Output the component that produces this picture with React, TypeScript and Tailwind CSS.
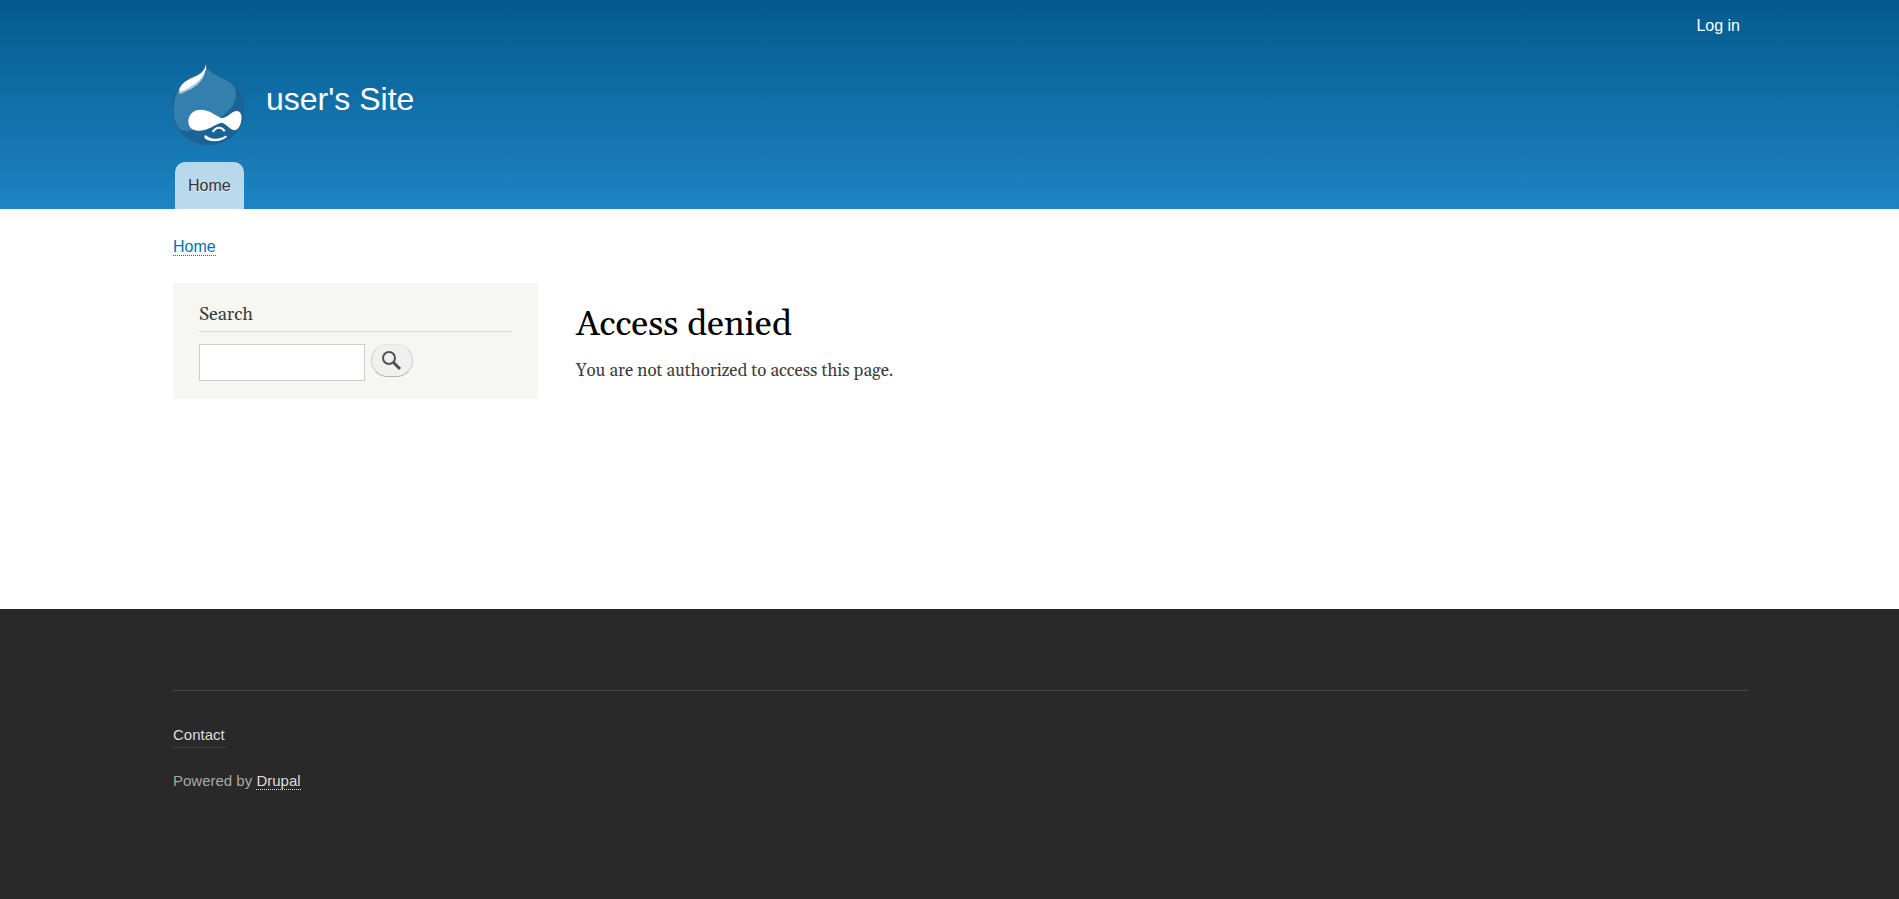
function DropletLogo() {
    return (
        <svg viewBox="24 9 213 246" className="h-[82px] w-[71px]" aria-hidden="true">
            <path
                d="M123 11 C126 24 134 32 146 40 L190 61 C221 77 237 106 237 148 C237 211 192 254 131 254 C70 254 24 211 24 151 C24 112 36 84 54 69 C72 54 92 52 108 41 C119 33 122 24 123 11Z"
                fill="#1a6396"
            />
            <path
                d="M123 14 C126 26 134 34 145 41 L188 63 C203 71 213 84 213 104 C212 134 190 156 165 173 C140 192 105 212 62 212 C52 212 44 208 40 204 C30 190 26 174 26 151 C26 112 38 85 55 71 C73 56 93 53 109 42 C118 35 122 25 123 14Z"
                fill="#3380af"
            />
            <path
                d="M123 11 C126 24 134 32 146 40 L190 61 C221 77 237 106 237 148 C237 211 192 254 131 254 C70 254 24 211 24 151 C24 112 36 84 54 69 C72 54 92 52 108 41 C119 33 122 24 123 11Z"
                fill="none"
                stroke="#245f88"
                strokeWidth="2"
            />
            <path
                d="M119 39 C117 61 93 81 66 93 C54 99 45 106 41 100 L44 84 C60 58 99 58 119 39Z"
                fill="#a6c5dc"
            />
            <path
                d="M123 12 C125 31 118 42 109 53 C97 70 75 82 57 91 C47 96 41 94 44 86 C51 68 70 58 91 49 C108 42 119 32 123 12Z"
                fill="#fff"
            />
            <path
                d="M70 184 C70 163 86 149 108 149 C133 149 149 165 168 174 C184 177 199 154 213 153 C226 151 232 165 229 181 C227 196 220 210 209 211 C196 211 184 190 169 188 C151 191 132 212 100 212 C82 212 70 202 70 184Z"
                fill="#fff"
            />
            <path d="M143 216 C154 199 170 199 179 214" fill="none" stroke="#fff" strokeWidth="6" />
            <path
                d="M119 227 C123 224 126 229 130 231 C145 239 165 238 180 228 C185 225 188 229 183 233 C164 247 132 246 121 236 C118 232 117 229 119 227Z"
                fill="#fff"
            />
        </svg>
    )
}

function SearchIcon() {
    return (
        <svg viewBox="0 0 20 20" className="size-5" fill="none" stroke="#505050" aria-hidden="true">
            <circle cx="7" cy="7" r="6" strokeWidth="2" />
            <path d="M11 11 L13 13" strokeWidth="2" />
            <path d="M12 12 L18 18" strokeWidth="3" />
        </svg>
    )
}

function Header() {
    return (
        <header className="bg-linear-to-b from-[#055a8e] to-[#1d84c3]">
            <div className="mx-auto max-w-[1597px] pl-[22px]">
                <nav className="flex justify-end pt-[14px] pr-2">
                    <a href="#login" className="text-base text-white">
                        Log in
                    </a>
                </nav>
                <div className="mt-[25px] flex gap-[22px]">
                    <a href="#home" aria-label="Home">
                        <DropletLogo />
                    </a>
                    <a href="#home" className="mt-3 text-[32px] leading-12 text-white">
                        user&apos;s Site
                    </a>
                </div>
                <nav className="mt-[17px] flex pl-0.5">
                    <a
                        href="#home"
                        className="rounded-t-[10px] bg-white/70 px-[13px] text-base leading-[47px] text-[#333] text-shadow-[0_1px_0_#eee]"
                    >
                        Home
                    </a>
                </nav>
            </div>
        </header>
    )
}

function SearchBlock() {
    return (
        <aside className="w-[365px] shrink-0 bg-[#f6f6f2] px-[26px] pt-[18px] pb-[18px]">
            <h2 className="mb-3 border-b border-[#d6d6d6] pb-0.5 font-[Georgia,Gelasio,'Liberation_Serif',serif] text-lg text-[#3b3b3b]">
                Search
            </h2>
            <form className="flex items-start gap-1.5" onSubmit={(e) => e.preventDefault()}>
                <input
                    type="search"
                    aria-label="Search"
                    className="h-[37px] w-[166px] border border-[#ccc] bg-white px-1 text-base text-[#3b3b3b]"
                />
                <button
                    type="submit"
                    aria-label="Search"
                    className="flex h-[33px] w-[42px] items-center justify-center rounded-full border border-[#ccc] border-t-[#e4e4e4] border-b-[#b4b4b4] bg-[#f0f0f0]"
                >
                    <SearchIcon />
                </button>
            </form>
        </aside>
    )
}

function Footer() {
    return (
        <footer className="grow bg-[#292929] pt-[81px]">
            <div className="mx-auto max-w-[1597px] pb-20 pl-[22px] text-[15px] text-[#a8a8a8]">
                <div className="border-t border-[#484848] pt-8">
                    <a href="#contact" className="inline-block border-b border-dotted border-[#555] leading-6 text-[#ddd]">
                        Contact
                    </a>
                </div>
                <p className="mt-[21px] leading-6">
                    Powered by{" "}
                    <a href="#drupal" className="border-b border-dotted border-[#ddd] text-[#ddd]">
                        Drupal
                    </a>
                </p>
            </div>
        </footer>
    )
}

export default function App() {
    return (
        <div className="flex min-h-screen flex-col bg-white font-['Liberation_Sans',Arial,sans-serif]">
            <Header />
            <main className="min-h-[400px]">
                <div className="mx-auto max-w-[1597px] pl-[22px]">
                    <nav className="pt-[26px]">
                        <a href="#home" className="border-b border-dotted border-[#0071b3] text-base text-[#0071b3]">
                            Home
                        </a>
                    </nav>
                    <div className="mt-6 flex items-start gap-[38px]">
                        <SearchBlock />
                        <section className="pt-[18px] font-[Georgia,Gelasio,'Liberation_Serif',serif]">
                            <h1 className="text-[35px] leading-12 text-black">Access denied</h1>
                            <p className="mt-2 text-[17px] leading-7 text-[#3b3b3b]">
                                You are not authorized to access this page.
                            </p>
                        </section>
                    </div>
                </div>
            </main>
            <Footer />
        </div>
    )
}
